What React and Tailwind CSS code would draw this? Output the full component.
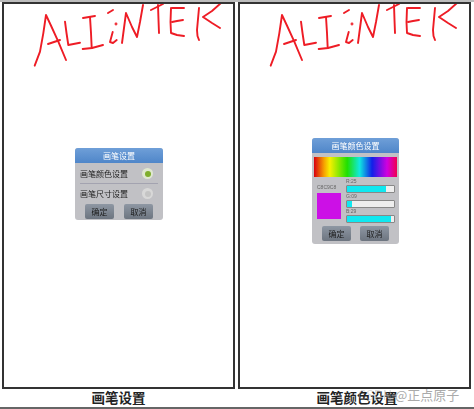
import React from "react";

const cjk = "font-['Noto_Sans_CJK_SC','Noto_Sans',sans-serif]";

// handwritten logo, drawn on the panels with a red pen
const Scribble = () => (
  <svg width="229" height="70" viewBox="0 0 229 70" fill="none" className="block shrink-0 blur-[0.3px]">
    <g stroke="#ee1c25" strokeWidth="1.9" strokeLinecap="round" strokeLinejoin="round" transform="translate(-4,-4)">
      <path d="M34.7 65.7 L40 51.7 L43.3 33.3 L46 15 L50.7 25 L58.3 41.7 L66 60" />
      <path d="M48 44 L54 42 L60 40" />
      <path d="M65 21.7 L66.5 33 L68.3 45 L80 42.7" />
      <path d="M83 18 L89 17 L95 16" />
      <path d="M90 17 L91 33 L91.7 48" />
      <path d="M82.7 49 L92 48 L103 45" />
      <path d="M108 13 L113 10" />
      <path d="M112.7 32 L110 42 L113 43 L116.7 40" />
      <path d="M122 43 L124 28 L126 13 L132 27 L137 37 L140 22 L143 5" />
      <path d="M151 10 L157 7 L163 4" />
      <path d="M158 5 L158.5 20 L159 33" />
      <path d="M172 8 L184 8" />
      <path d="M171 8 L170.5 22 L171 33 L177 35 L184 36" />
      <path d="M172 22 L177 21 L183 20" />
      <path d="M199 8 L197 30 L197.5 36 L199 40" />
      <path d="M221 3 L212 11 L203 17 L212 23 L220 28" />
      <circle cx="116" cy="24" r="0.5" />
    </g>
  </svg>
);

const Title = ({ children }) => (
  <div className="h-[15px] rounded-t-[3px] bg-gradient-to-b from-[#6f9fd8] to-[#4f86c9] flex items-center justify-center text-[8px] leading-none text-white">
    {children}
  </div>
);

const DialogButton = ({ children }) => (
  <div className="w-[29px] h-[15px] rounded-[2px] bg-gradient-to-b from-[#8e97a3] to-[#6d7580] flex items-center justify-center text-[8px] leading-none text-[#1c1c1c]">
    {children}
  </div>
);

const Radio = ({ on }) => (
  <div className={`w-[11px] h-[11px] rounded-full flex items-center justify-center ${on ? "bg-[#dfe8d0]" : "bg-[#d8d8d8]"}`}>
    <div className={`w-[6px] h-[6px] rounded-full ${on ? "bg-[#7fae2c]" : "bg-[#c4c4c4]"}`} />
  </div>
);

const Slider = ({ label, value }) => (
  <div>
    <div className="h-[7px] text-[5px] leading-[7px] text-[#666] font-['Liberation_Sans',sans-serif]">{label}</div>
    <div className="h-[8px] bg-[#eeeeee] border border-[#888] rounded-[1px] overflow-hidden">
      <div className="h-full bg-[#10e8f0]" style={{ width: `${value}%` }} />
    </div>
  </div>
);

const PenDialog = () => (
  <div className={`w-[88px] h-[72px] mt-[74px] ml-[71px] rounded-[3px] bg-[#c1c1c5] ${cjk} blur-[0.35px]`}>
    <Title>画笔设置</Title>
    <div className="flex items-center justify-between h-[19px] mt-px pl-[5px] pr-[10px] text-[8px] leading-none text-[#222]">
      <span>画笔颜色设置</span>
      <Radio on />
    </div>
    <div className="h-px mx-[5px] bg-[#a3a3b0]" />
    <div className="flex items-center justify-between h-[19px] pl-[5px] pr-[10px] text-[8px] leading-none text-[#222]">
      <span>画笔尺寸设置</span>
      <Radio />
    </div>
    <div className="flex justify-between px-[10px] mt-[1px]">
      <DialogButton>确定</DialogButton>
      <DialogButton>取消</DialogButton>
    </div>
  </div>
);

const ColorDialog = () => (
  <div className={`w-[87px] h-[106px] mt-[64px] ml-[72px] rounded-[3px] bg-[#c1c1c5] ${cjk} blur-[0.35px]`}>
    <Title>画笔颜色设置</Title>
    <div className="h-[20px] mx-[2px] mt-[4px] bg-[linear-gradient(90deg,#d80010_0%,#f6a000_12%,#f8f000_19%,#20e000_40%,#10e8e0_55%,#1020e8_70%,#d000e0_88%,#f00050_100%)]" />
    <div className="flex gap-[5px] pl-[5px] pr-[4px] mt-[1px]">
      <div className="w-[24px] shrink-0 pt-[5px]">
        <div className="h-[8px] text-[5px] leading-[8px] text-[#666] font-['Liberation_Sans',sans-serif]">C8C9C8</div>
        <div className="h-[26px] mt-[2px] bg-[#cc10e6]" />
      </div>
      <div className="flex-1 flex flex-col">
        <Slider label="R:25" value={82} />
        <Slider label="G:09" value={10} />
        <Slider label="B:29" value={94} />
      </div>
    </div>
    <div className="flex justify-between px-[10px] mt-[3px]">
      <DialogButton>确定</DialogButton>
      <DialogButton>取消</DialogButton>
    </div>
  </div>
);

const Panel = ({ children }) => (
  <div className="w-[233px] h-[387px] border-2 border-[#333] bg-white overflow-hidden">
    <Scribble />
    {children}
  </div>
);

export default function App() {
  return (
    <div className={`relative w-[474px] h-[409px] bg-white overflow-hidden flex flex-col ${cjk}`}>
      <div className="h-[2px] bg-[#bdbdbd]" />
      <div className="flex gap-[3px] pl-[2px]">
        <Panel>
          <PenDialog />
        </Panel>
        <Panel>
          <ColorDialog />
        </Panel>
      </div>
      <div className="flex flex-1 text-[13.5px] leading-none font-bold text-[#222] pl-[2px] gap-[3px] items-center">
        <div className="w-[233px] text-center">画笔设置</div>
        <div className="w-[233px] text-center pl-[5px]">画笔颜色设置</div>
      </div>
      <div className="h-[2px] bg-[#666]" />
      <div className="absolute left-[358px] top-[388px] text-[13px] leading-none text-[#aaaaaa]">
        <span className="opacity-40">CSDN </span>@正点原子
      </div>
    </div>
  );
}
